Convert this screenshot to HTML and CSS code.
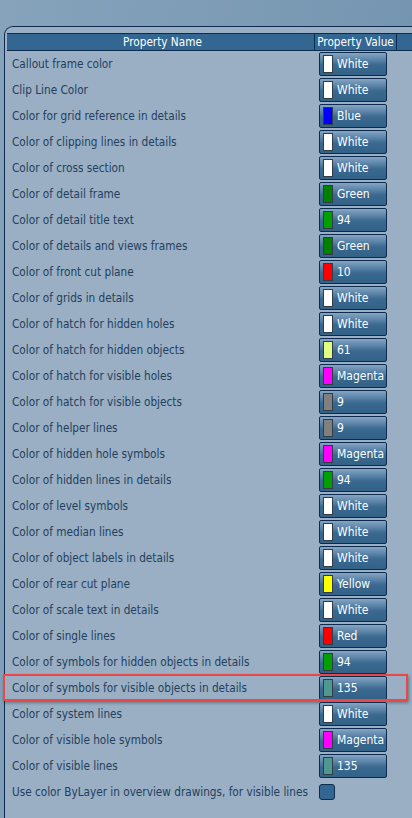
FILE: index.html
```html
<!DOCTYPE html>
<html>
<head>
<meta charset="utf-8">
<link rel="stylesheet" href="styles.css">
</head>
<body>
<div class="top"></div>
<div class="panel">
  <div class="header">
    <div class="h-name">Property Name</div>
    <div class="h-value">Property Value</div>
    <div class="h-fill"></div>
  </div>
  <div class="rows">
    <div class="row"><span class="label">Callout frame color</span><div class="btn"><span class="sw" style="background:#ffffff"></span>White</div></div>
    <div class="row"><span class="label">Clip Line Color</span><div class="btn"><span class="sw" style="background:#ffffff"></span>White</div></div>
    <div class="row"><span class="label">Color for grid reference in details</span><div class="btn"><span class="sw" style="background:#0000ff"></span>Blue</div></div>
    <div class="row"><span class="label">Color of clipping lines in details</span><div class="btn"><span class="sw" style="background:#ffffff"></span>White</div></div>
    <div class="row"><span class="label">Color of cross section</span><div class="btn"><span class="sw" style="background:#ffffff"></span>White</div></div>
    <div class="row"><span class="label">Color of detail frame</span><div class="btn"><span class="sw" style="background:#008000"></span>Green</div></div>
    <div class="row"><span class="label">Color of detail title text</span><div class="btn"><span class="sw" style="background:#00a000"></span>94</div></div>
    <div class="row"><span class="label">Color of details and views frames</span><div class="btn"><span class="sw" style="background:#008000"></span>Green</div></div>
    <div class="row"><span class="label">Color of front cut plane</span><div class="btn"><span class="sw" style="background:#ff0000"></span>10</div></div>
    <div class="row"><span class="label">Color of grids in details</span><div class="btn"><span class="sw" style="background:#ffffff"></span>White</div></div>
    <div class="row"><span class="label">Color of hatch for hidden holes</span><div class="btn"><span class="sw" style="background:#ffffff"></span>White</div></div>
    <div class="row"><span class="label">Color of hatch for hidden objects</span><div class="btn"><span class="sw" style="background:#e0ff80"></span>61</div></div>
    <div class="row"><span class="label">Color of hatch for visible holes</span><div class="btn"><span class="sw" style="background:#ff00ff"></span>Magenta</div></div>
    <div class="row"><span class="label">Color of hatch for visible objects</span><div class="btn"><span class="sw" style="background:#808080"></span>9</div></div>
    <div class="row"><span class="label">Color of helper lines</span><div class="btn"><span class="sw" style="background:#808080"></span>9</div></div>
    <div class="row"><span class="label">Color of hidden hole symbols</span><div class="btn"><span class="sw" style="background:#ff00ff"></span>Magenta</div></div>
    <div class="row"><span class="label">Color of hidden lines in details</span><div class="btn"><span class="sw" style="background:#00a000"></span>94</div></div>
    <div class="row"><span class="label">Color of level symbols</span><div class="btn"><span class="sw" style="background:#ffffff"></span>White</div></div>
    <div class="row"><span class="label">Color of median lines</span><div class="btn"><span class="sw" style="background:#ffffff"></span>White</div></div>
    <div class="row"><span class="label">Color of object labels in details</span><div class="btn"><span class="sw" style="background:#ffffff"></span>White</div></div>
    <div class="row"><span class="label">Color of rear cut plane</span><div class="btn"><span class="sw" style="background:#ffff00"></span>Yellow</div></div>
    <div class="row"><span class="label">Color of scale text in details</span><div class="btn"><span class="sw" style="background:#ffffff"></span>White</div></div>
    <div class="row"><span class="label">Color of single lines</span><div class="btn"><span class="sw" style="background:#ff0000"></span>Red</div></div>
    <div class="row"><span class="label">Color of symbols for hidden objects in details</span><div class="btn"><span class="sw" style="background:#00a000"></span>94</div></div>
    <div class="row selected"><span class="label">Color of symbols for visible objects in details</span><div class="btn"><span class="sw" style="background:#4f9890"></span>135</div></div>
    <div class="row"><span class="label">Color of system lines</span><div class="btn"><span class="sw" style="background:#ffffff"></span>White</div></div>
    <div class="row"><span class="label">Color of visible hole symbols</span><div class="btn"><span class="sw" style="background:#ff00ff"></span>Magenta</div></div>
    <div class="row"><span class="label">Color of visible lines</span><div class="btn"><span class="sw" style="background:#4f9890"></span>135</div></div>
    <div class="row"><span class="label">Use color ByLayer in overview drawings, for visible lines</span><div class="check"></div></div>
  </div>
</div>
</body>
</html>
```
FILE: styles.css
```css
html, body {
  margin: 0;
  padding: 0;
}
body {
  width: 412px;
  height: 818px;
  overflow: hidden;
  background: linear-gradient(100deg, #86a3bb 0%, #7b9ab4 50%, #6e90ad 100%);
  font-family: "DejaVu Sans Condensed", "DejaVu Sans", sans-serif;
  font-stretch: condensed;
}
.top {
  height: 26px;
}
.panel {
  margin-left: 4px;
  height: 800px;
  background: #9aafc3;
  border-left: 1px solid #0d2b4e;
  border-top: 1px solid #0d2b4e;
  border-top-left-radius: 9px;
  padding: 6px 0 0 2px;
  box-sizing: border-box;
}
.header {
  display: grid;
  grid-template-columns: 308px 82px 1fr;
  height: 18px;
  background: #336690;
  border-top: 1px solid #0d2b4e;
  border-bottom: 1px solid #0d2b4e;
  color: #ffffff;
  font-size: 11.7px;
  line-height: 16px;
  box-sizing: border-box;
}
.h-name {
  text-align: center;
  border-right: 1px solid #0d2b4e;
  padding-left: 4px;
}
.h-value {
  text-align: center;
  border-right: 1px solid #0d2b4e;
  white-space: nowrap;
}
.rows {
  display: flex;
  flex-direction: column;
}
.row {
  display: grid;
  grid-template-columns: 312px 1fr;
  align-items: center;
  height: 26px;
  position: relative;
}
.label {
  padding-left: 5px;
  font-size: 11.7px;
  color: #22405f;
  white-space: nowrap;
}
.btn {
  width: 68px;
  height: 24px;
  box-sizing: border-box;
  border: 1px solid #0d2b4e;
  border-radius: 2px;
  background: linear-gradient(180deg, #86a5c1 0%, #5c84a9 30%, #3a6890 55%, #336288 100%);
  color: #ffffff;
  font-size: 12px;
  display: flex;
  align-items: center;
  gap: 4px;
  padding-left: 3px;
}
.sw {
  width: 8px;
  height: 16px;
  border: 1px solid #333b44;
  box-sizing: content-box;
}
.check {
  width: 16px;
  height: 16px;
  box-sizing: border-box;
  border: 1px solid #0d2b4e;
  border-radius: 3px;
  background: #336690;
}
.selected::after {
  content: "";
  position: absolute;
  left: -4px;
  top: -1px;
  width: 405px;
  height: 27px;
  border: 2px solid #ec4646;
  box-sizing: border-box;
  box-shadow: 1px 2px 3px rgba(0, 0, 0, 0.35);
}
```
